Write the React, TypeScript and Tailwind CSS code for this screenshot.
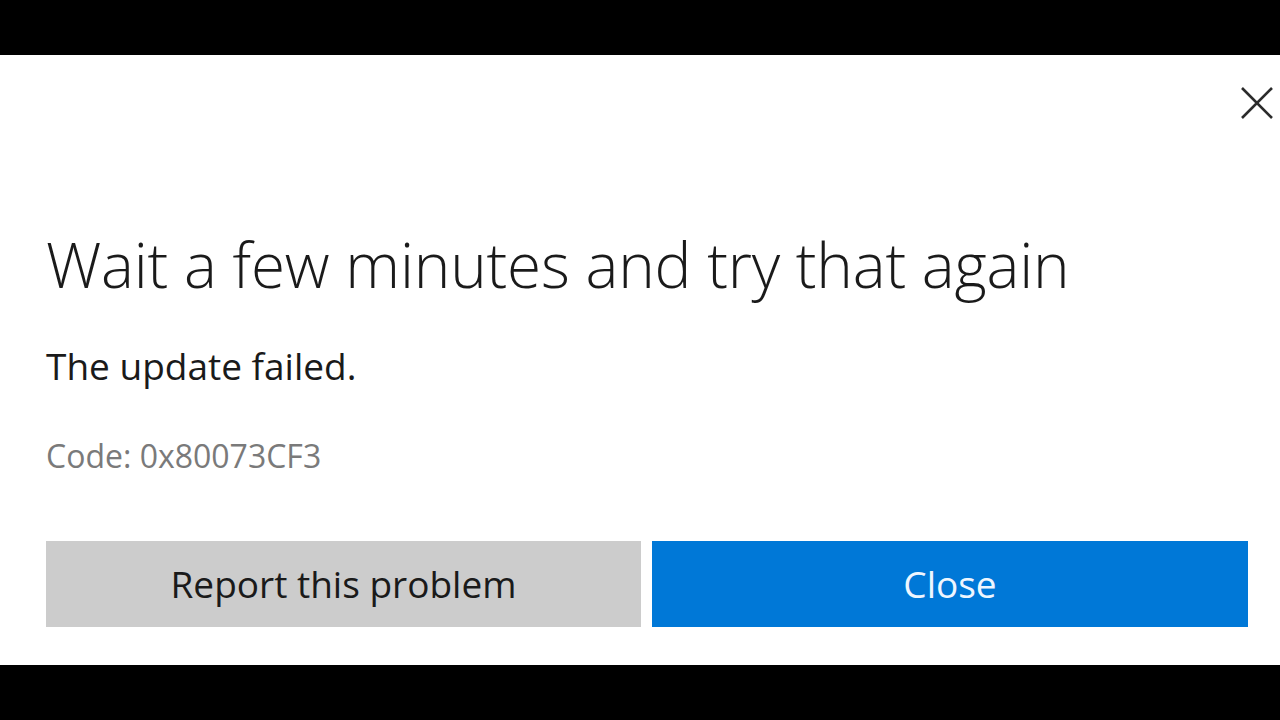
import React from "react";

export default function App() {
  return (
    <div className="w-[1280px] h-[720px] bg-black flex flex-col" style={{ fontFamily: '"Open Sans", "Noto Sans", sans-serif' }}>
      <div className="h-[55px] bg-black" />
      <div className="h-[610px] bg-white flex flex-col pl-[46px] pr-[32px]">
        <div className="flex justify-end pt-[31px] h-[173px]">
          <svg width="34" height="34" viewBox="0 0 34 34" className="mr-[-26px]">
            <path d="M2 2 L32 32 M32 2 L2 32" stroke="#2b2b2b" strokeWidth="2.6" />
          </svg>
        </div>
        <div className="text-[62px] leading-[72px] text-[#1a1a1a] font-light tracking-[-0.2px] whitespace-nowrap">Wait a few minutes and try that again</div>
        <div className="mt-[46px] text-[37px] leading-[40px] text-[#1a1a1a]">The update failed.</div>
        <div className="mt-[50px] text-[32px] leading-[40px] text-[#7a7a7a]">Code: 0x80073CF3</div>
        <div className="mt-[65px] flex gap-[11px] w-[1202px]">
          <div className="w-[595px] h-[86px] bg-[#cccccc] flex items-center justify-center text-[37px] text-[#1a1a1a]">Report this problem</div>
          <div className="w-[596px] h-[86px] bg-[#0078d7] flex items-center justify-center text-[37px] text-[#eef6ff]">Close</div>
        </div>
      </div>
      <div className="h-[55px] bg-black" />
    </div>
  );
}
